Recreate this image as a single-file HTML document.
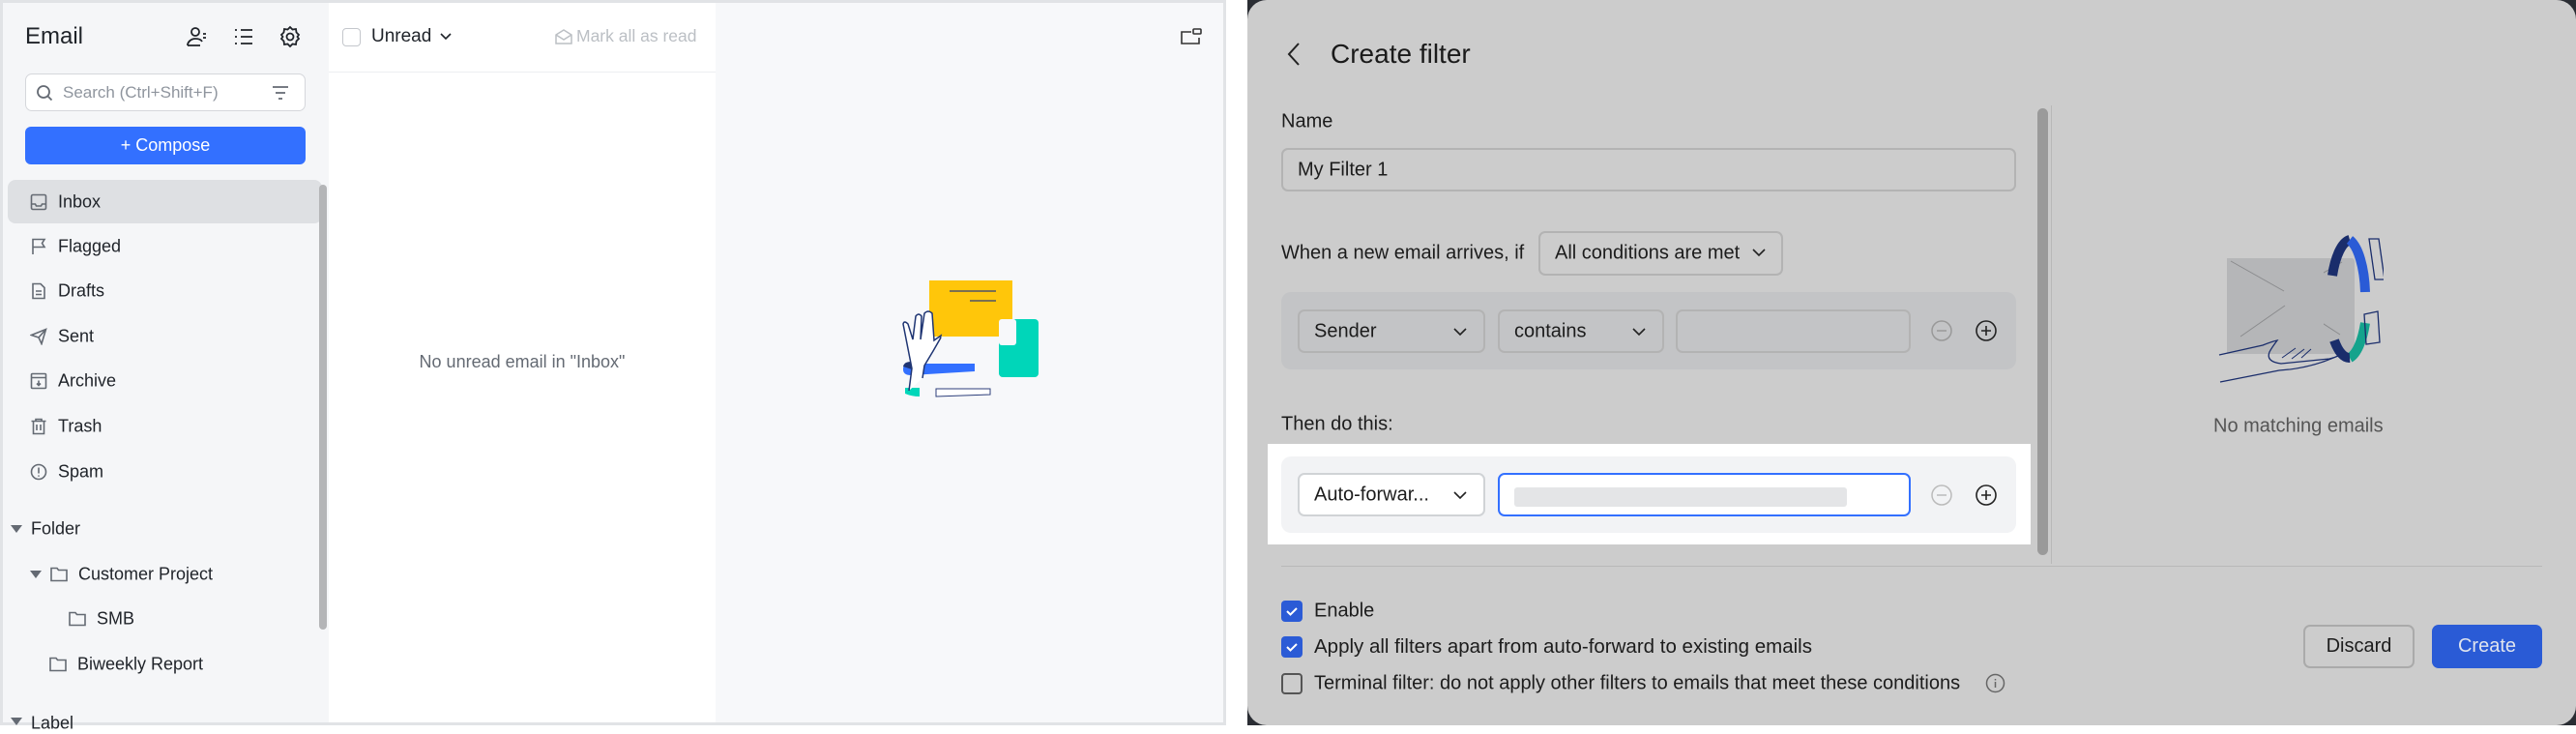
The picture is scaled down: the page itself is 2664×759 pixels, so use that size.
<!DOCTYPE html>
<html><head><meta charset="utf-8"><style>
*{box-sizing:border-box;margin:0;padding:0}
body{width:2664px;height:750px;background:#fff;position:relative;overflow:hidden;font-family:"Liberation Sans",sans-serif;color:#1f2329}
.a{position:absolute}
.lp{left:0;top:0;width:1268px;height:750px;border:3px solid #e1e3e6;background:#f7f8fa}
.side{left:3px;top:3px;width:337px;height:744px;background:#f5f6f8}
.mid{left:340px;top:3px;width:400px;height:744px;background:#fff}
.item{position:absolute;left:60px;font-size:18px;color:#1f2329;transform:translateY(-50%)}
.ic{position:absolute;transform:translate(-50%,-50%)}
.modal{left:1290px;top:0;width:1374px;height:750px;background:#2a2d33}
.mi{left:1290px;top:0;width:1374px;height:750px;background:#cccccc;border-radius:20px}
.t{position:absolute;font-size:20px;color:#1c1c1c;transform:translateY(-50%);white-space:nowrap}
.box{position:absolute;border:2px solid #b3b3b3;border-radius:7px}
.cb{position:absolute;width:22px;height:22px;border-radius:4px;background:#2b5bd6}
</style></head><body>
<div class="a lp"></div>
<div class="a side"></div>
<div class="a mid"></div>
<!-- sidebar -->
<div class="a" style="left:26px;top:24px;font-size:24px;color:#1f2329">Email</div>
<svg class="a" style="left:192px;top:26px" width="24" height="24" viewBox="0 0 24 24" fill="none" stroke="#1f2329" stroke-width="1.8"><circle cx="10" cy="7" r="4"/><path d="M2 21c0-4 4-7 8-7s6 1 7 3M2 21h13M18 9h3M18 13h3"/></svg>
<svg class="a" style="left:241px;top:27px" width="22" height="22" viewBox="0 0 22 22" fill="none" stroke="#1f2329" stroke-width="1.8"><path d="M2 4h2M8 4h12M2 11h2M8 11h12M2 18h2M8 18h12"/></svg>
<svg class="a" style="left:288px;top:26px" width="24" height="24" viewBox="0 0 24 24" fill="none" stroke="#1f2329" stroke-width="1.8"><circle cx="12" cy="12" r="3.5"/><path d="M12 2l2.5 2.5 3.5-.5.5 3.5L21 10l-1.5 2 1.5 2-2.5 2.5-.5 3.5-3.5-.5L12 22l-2.5-2.5-3.5.5-.5-3.5L3 14l1.5-2L3 10l2.5-2.5.5-3.5 3.5.5z"/></svg>
<div class="a" style="left:26px;top:76px;width:290px;height:39px;background:#fff;border:1px solid #d5d7db;border-radius:7px"></div>
<svg class="a" style="left:36px;top:86px" width="20" height="20" viewBox="0 0 20 20" fill="none" stroke="#646a73" stroke-width="1.8"><circle cx="9" cy="9" r="6"/><path d="M13.5 13.5l4 4"/></svg>
<div class="a" style="left:65px;top:86px;font-size:17px;color:#8f959e">Search (Ctrl+Shift+F)</div>
<svg class="a" style="left:280px;top:86px" width="20" height="20" viewBox="0 0 20 20" fill="none" stroke="#646a73" stroke-width="1.8"><path d="M2 4h16M5 10h10M8 16h4"/></svg>
<div class="a" style="left:26px;top:131px;width:290px;height:39px;background:#3370ff;border-radius:6px;color:#fff;font-size:18px;text-align:center;line-height:39px">+ Compose</div>
<div class="a" style="left:8px;top:186px;width:325px;height:45px;background:#dee0e3;border-radius:8px"></div>
<div class="a" style="left:330px;top:191px;width:8px;height:460px;background:#b4b5b7;border-radius:4px"></div>
<svg class="ic" style="left:40px;top:209px" width="18" height="18" viewBox="0 0 18 18" fill="none" stroke="#646a73" stroke-width="1.6"><rect x="1.5" y="1.5" width="15" height="15" rx="1.5"/><path d="M1.5 11h4l1 2h5l1-2h4"/></svg>
<div class="item" style="top:209px">Inbox</div>
<svg class="ic" style="left:40px;top:255px" width="18" height="18" viewBox="0 0 18 18" fill="none" stroke="#646a73" stroke-width="1.6"><path d="M3 17V1.5h12l-2.5 4 2.5 4H3"/></svg>
<div class="item" style="top:255px">Flagged</div>
<svg class="ic" style="left:40px;top:301px" width="18" height="18" viewBox="0 0 18 18" fill="none" stroke="#646a73" stroke-width="1.6"><path d="M3 1.5h8l4 4v11H3z M6 9h6M6 12.5h6"/></svg>
<div class="item" style="top:301px">Drafts</div>
<svg class="ic" style="left:40px;top:348px" width="18" height="18" viewBox="0 0 18 18" fill="none" stroke="#646a73" stroke-width="1.6"><path d="M1.5 7.5L16.5 1.5 12 16.5 9 10zM9 10l7.5-8.5"/></svg>
<div class="item" style="top:348px">Sent</div>
<svg class="ic" style="left:40px;top:394px" width="18" height="18" viewBox="0 0 18 18" fill="none" stroke="#646a73" stroke-width="1.6"><rect x="1.5" y="1.5" width="15" height="15" rx="1"/><path d="M1.5 5.5h15M9 8.5v5M7 11.5l2 2 2-2"/></svg>
<div class="item" style="top:394px">Archive</div>
<svg class="ic" style="left:40px;top:441px" width="18" height="18" viewBox="0 0 18 18" fill="none" stroke="#646a73" stroke-width="1.6"><path d="M1.5 3.5h15M6 3.5V1.5h6v2M3.5 3.5v13h11v-13M7 7v6M11 7v6"/></svg>
<div class="item" style="top:441px">Trash</div>
<svg class="ic" style="left:40px;top:488px" width="18" height="18" viewBox="0 0 18 18" fill="none" stroke="#646a73" stroke-width="1.6"><circle cx="9" cy="9" r="7.5"/><path d="M9 4.5v6M9 12.5v1.2"/></svg>
<div class="item" style="top:488px">Spam</div>
<svg class="ic" style="left:17px;top:547px" width="12" height="8"><path d="M0 0h12L6 8z" fill="#646a73"/></svg>
<div class="item" style="top:547px;left:32px">Folder</div>
<svg class="ic" style="left:37px;top:594px" width="12" height="8"><path d="M0 0h12L6 8z" fill="#646a73"/></svg>
<svg class="ic" style="left:61px;top:594px" width="18" height="16" viewBox="0 0 18 16" fill="none" stroke="#646a73" stroke-width="1.6"><path d="M1 1.5h6l1.5 2H17v11H1z"/></svg>
<div class="item" style="top:594px;left:81px">Customer Project</div>
<svg class="ic" style="left:80px;top:640px" width="18" height="16" viewBox="0 0 18 16" fill="none" stroke="#646a73" stroke-width="1.6"><path d="M1 1.5h6l1.5 2H17v11H1z"/></svg>
<div class="item" style="top:640px;left:100px">SMB</div>
<svg class="ic" style="left:60px;top:687px" width="18" height="16" viewBox="0 0 18 16" fill="none" stroke="#646a73" stroke-width="1.6"><path d="M1 1.5h6l1.5 2H17v11H1z"/></svg>
<div class="item" style="top:687px;left:80px">Biweekly Report</div>
<svg class="ic" style="left:17px;top:746px" width="12" height="8"><path d="M0 0h12L6 8z" fill="#646a73"/></svg>
<div class="item" style="top:748px;left:32px">Label</div>
<!-- middle -->
<div class="a" style="left:354px;top:29px;width:19px;height:19px;border:1.5px solid #c4c7cc;border-radius:4px;background:#fff"></div>
<div class="a" style="left:384px;top:27px;font-size:19px;color:#1f2329">Unread</div>
<svg class="a" style="left:455px;top:33px" width="12" height="10" fill="none" stroke="#1f2329" stroke-width="1.6"><path d="M1 2l5 5 5-5"/></svg>
<svg class="a" style="left:574px;top:30px" width="18" height="16" viewBox="0 0 18 16" fill="none" stroke="#bbbfc4" stroke-width="1.5"><path d="M1 6l8-5 8 5v9H1zM1 6l8 5 8-5"/></svg>
<div class="a" style="left:596px;top:27px;font-size:17.5px;color:#bbbfc4">Mark all as read</div>
<div class="a" style="left:340px;top:74px;width:400px;height:1px;background:#eceef1"></div>
<div class="a" style="left:340px;top:364px;width:400px;text-align:center;font-size:18px;color:#646a73">No unread email in "Inbox"</div>
<!-- preview -->
<svg class="a" style="left:1220px;top:29px" width="23" height="18" viewBox="0 0 23 18" fill="none" stroke="#333" stroke-width="1.6"><path d="M12 4H2v12h18v-6"/><rect x="14" y="1" width="8" height="5" rx="1"/></svg>
<svg class="a" style="left:930px;top:284px" width="150" height="135" viewBox="0 0 150 135">
<path d="M31 6h86v58H31z" fill="#ffc60a"/>
<path d="M52 17h48M73 27h27" stroke="#2c3e7a" stroke-width="1.2"/>
<rect x="103" y="46" width="41" height="60" rx="4" fill="#00d6b9"/>
<rect x="103" y="46" width="18" height="27" rx="3" fill="#f7f8fa"/>
<path d="M4 98q0-8 8-6l66 0v8l-66 4q-8 0-8-6z" fill="#3370ff"/>
<path d="M6 117h15v9q-8 0-15-3z" fill="#00d6b9"/>
<path d="M38 118h56v6l-56 2z" fill="#fff" stroke="#2c3e7a" stroke-width="1"/>
<path d="M10 120l3-23-9-46q1-4 5 0l5 16 3-24q3-4 6 0l-1 24 4-27q4-4 8 0l2 28 7-5q-1 4 0 2l-8 14-9 15-2 13" fill="#fff" stroke="#1f3573" stroke-width="1.5"/>
<path d="M4 95q1-5 8-5l1 8z" fill="#1f3573"/>
</svg>
<!-- modal -->
<div class="a modal"></div>
<div class="a mi"></div>
<svg class="a" style="left:1330px;top:43px" width="16" height="26" fill="none" stroke="#222" stroke-width="2"><path d="M13 2L3 13l10 11"/></svg>
<div class="t" style="left:1376px;top:56px;font-size:28px;color:#1a1a1a">Create filter</div>
<div class="t" style="left:1325px;top:126px">Name</div>
<div class="box" style="left:1325px;top:153px;width:760px;height:45px"></div>
<div class="t" style="left:1342px;top:176px">My Filter 1</div>
<div class="t" style="left:1325px;top:262px">When a new email arrives, if</div>
<div class="box" style="left:1591px;top:239px;width:253px;height:46px"></div>
<div class="t" style="left:1608px;top:262px">All conditions are met</div>
<svg class="a" style="left:1812px;top:256px" width="14" height="10" fill="none" stroke="#222" stroke-width="1.6"><path d="M1 2l6 6 6-6"/></svg>
<div class="a" style="left:1325px;top:302px;width:760px;height:80px;background:#c3c4c6;border-radius:10px"></div>
<div class="box" style="left:1342px;top:320px;width:194px;height:45px"></div>
<div class="t" style="left:1359px;top:343px">Sender</div>
<svg class="a" style="left:1503px;top:338px" width="14" height="10" fill="none" stroke="#222" stroke-width="1.6"><path d="M1 2l6 6 6-6"/></svg>
<div class="box" style="left:1549px;top:320px;width:172px;height:45px"></div>
<div class="t" style="left:1566px;top:343px">contains</div>
<svg class="a" style="left:1688px;top:338px" width="14" height="10" fill="none" stroke="#222" stroke-width="1.6"><path d="M1 2l6 6 6-6"/></svg>
<div class="box" style="left:1733px;top:320px;width:243px;height:45px"></div>
<svg class="a" style="left:1996px;top:330px" width="24" height="24" fill="none" stroke="#999" stroke-width="1.5"><circle cx="12" cy="12" r="10"/><path d="M7 12h10"/></svg>
<svg class="a" style="left:2042px;top:330px" width="24" height="24" fill="none" stroke="#222" stroke-width="1.6"><circle cx="12" cy="12" r="10"/><path d="M7 12h10M12 7v10"/></svg>
<div class="t" style="left:1325px;top:439px">Then do this:</div>
<div class="a" style="left:1311px;top:459px;width:789px;height:104px;background:#fff"></div>
<div class="a" style="left:1325px;top:472px;width:760px;height:79px;background:#f2f3f5;border-radius:10px"></div>
<div class="a" style="left:1342px;top:489px;width:194px;height:45px;background:#fff;border:2px solid #d0d3d6;border-radius:7px"></div>
<div class="t" style="left:1359px;top:512px">Auto-forwar...</div>
<svg class="a" style="left:1503px;top:507px" width="14" height="10" fill="none" stroke="#222" stroke-width="1.6"><path d="M1 2l6 6 6-6"/></svg>
<div class="a" style="left:1549px;top:489px;width:427px;height:45px;background:#fff;border:2px solid #3370ff;border-radius:7px"></div>
<div class="a" style="left:1566px;top:504px;width:344px;height:20px;background:#e4e5e7;border-radius:3px"></div>
<svg class="a" style="left:1996px;top:500px" width="24" height="24" fill="none" stroke="#bbb" stroke-width="1.5"><circle cx="12" cy="12" r="10"/><path d="M7 12h10"/></svg>
<svg class="a" style="left:2042px;top:500px" width="24" height="24" fill="none" stroke="#222" stroke-width="1.6"><circle cx="12" cy="12" r="10"/><path d="M7 12h10M12 7v10"/></svg>
<div class="a" style="left:2107px;top:112px;width:11px;height:462px;background:#9a9a9a;border-radius:6px"></div>
<div class="a" style="left:2121px;top:109px;width:1px;height:474px;background:#b8b8b8"></div>
<div class="a" style="left:1325px;top:585px;width:1304px;height:1px;background:#b8b8b8"></div>
<div class="cb" style="left:1325px;top:621px"></div>
<svg class="a" style="left:1329px;top:625px" width="14" height="14" fill="none" stroke="#fff" stroke-width="2"><path d="M2 7l3.5 3.5L12 4"/></svg>
<div class="t" style="left:1359px;top:632px">Enable</div>
<div class="cb" style="left:1325px;top:658px"></div>
<svg class="a" style="left:1329px;top:662px" width="14" height="14" fill="none" stroke="#fff" stroke-width="2"><path d="M2 7l3.5 3.5L12 4"/></svg>
<div class="t" style="left:1359px;top:669px;font-size:20.5px">Apply all filters apart from auto-forward to existing emails</div>
<div class="cb" style="left:1325px;top:696px;background:transparent;border:2px solid #555"></div>
<div class="t" style="left:1359px;top:707px;font-size:20px">Terminal filter: do not apply other filters to emails that meet these conditions</div>
<svg class="a" style="left:2053px;top:696px" width="21" height="21" fill="none" stroke="#666" stroke-width="1.5"><circle cx="10.5" cy="10.5" r="9"/><path d="M10.5 9v6M10.5 6v1.5"/></svg>
<!-- right illustration -->
<svg class="a" style="left:2290px;top:240px" width="175" height="162" viewBox="0 0 175 162">
<rect x="13" y="27" width="132" height="99" rx="3" fill="#b5b6b8"/>
<path d="M17 30l55 31q4 3 8 0l52-30M27 108l46-32M130 106l-40-26" stroke="#8a8b8d" stroke-width="1" fill="none"/>
<path d="M122 45 A22 62 0 0 1 140 8" fill="none" stroke="#1a2d6b" stroke-width="10"/>
<path d="M140 8 A22 62 0 0 1 156 62" fill="none" stroke="#2a5bd6" stroke-width="10"/>
<path d="M156 94 A22 62 0 0 1 140 130" fill="none" stroke="#14a38c" stroke-width="10"/>
<path d="M140 130 A22 62 0 0 1 124 112" fill="none" stroke="#1a2d6b" stroke-width="10"/>
<rect x="13" y="27" width="100" height="99" fill="#b5b6b8"/>
<path d="M17 30l55 31M27 108l46-32" stroke="#8a8b8d" stroke-width="1" fill="none"/>
<path d="M160 7l10 0 6 42h-10z" fill="none" stroke="#1a2d6b" stroke-width="1.3"/>
<path d="M155 85l14-3 2 32-14 2z" fill="none" stroke="#1a2d6b" stroke-width="1.3"/>
<path d="M5 127l45-10q10-4 15-5-6 8-8 12-4 10 12 12l50-5q8-2 11-4-30 14-63 16L6 155" fill="none" stroke="#1a2d6b" stroke-width="1.3"/>
<path d="M70 130l14-10M80 131l13-10M90 130l10-9" stroke="#1a2d6b" stroke-width="1"/>
</svg>
<div class="t" style="left:2289px;top:441px;color:#555">No matching emails</div>
<div class="a" style="left:2382px;top:646px;width:115px;height:45px;border:2px solid #aaa;border-radius:7px;text-align:center;line-height:41px;font-size:20px;color:#1c1c1c">Discard</div>
<div class="a" style="left:2515px;top:646px;width:114px;height:45px;background:#2a5bd6;border-radius:7px;text-align:center;line-height:45px;font-size:20px;color:#dfe4ee">Create</div>
</body></html>
